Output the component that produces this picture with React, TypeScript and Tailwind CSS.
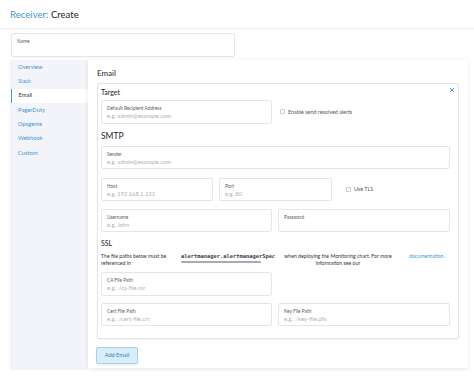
const nav = ['Overview', 'Slack', 'Email', 'PagerDuty', 'Opsgenie', 'Webhook', 'Custom']

function Field({ label, placeholder, w }: { label: string; placeholder?: string; w: string }) {
  return (
    <div className={`${w} h-[23px] border border-[#e4e5ea] rounded-[2px] bg-white px-[5px] pt-[4px] flex flex-col`}>
      <span className="text-[4.8px] leading-[6px] text-[#5a5b63]">{label}</span>
      {placeholder && <span className="text-[5.8px] leading-[8px] mt-[1px] text-[#b0b1b7]">{placeholder}</span>}
    </div>
  )
}

function Check({ label }: { label: string }) {
  return (
    <div className="flex items-center gap-[3px] ml-[8px]">
      <span className="w-[5px] h-[5px] border border-[#c9cad0] rounded-[1px] bg-white" />
      <span className="text-[5.4px] text-[#55565c]">{label}</span>
    </div>
  )
}

export default function App() {
  return (
    <div className="w-[474px] h-[384px] bg-white overflow-hidden font-['Lato','Liberation_Sans',sans-serif] text-[#222]">
      <div className="pl-[10px] pt-[8px] h-[29px] border-b border-[#e9eaee]">
        <h1 className="text-[9.6px] leading-[14px]">
          <span className="text-[#3d98d4]">Receiver:</span> <span className="text-[#1d1d1f]">Create</span>
        </h1>
      </div>

      <div className="ml-[11px] mt-[4px] w-[224px] h-[24px] border border-[#e4e5ea] rounded-[2px] px-[5px] pt-[4px] shadow-[0_1px_2px_rgba(0,0,0,0.04)]">
        <span className="text-[4.8px] leading-[6px] text-[#5a5b63] block">Name</span>
      </div>

      <div className="flex ml-[10px] mt-[3px]">
        <div className="w-[78px] h-[310px] flex flex-col">
          {nav.map((n) => (
            <div
              key={n}
              className={
                n === 'Email'
                  ? 'h-[14.3px] flex items-center pl-[7px] bg-white border-l-[1.5px] border-[#3d98d4] ml-[0.5px] text-[5.8px] text-[#333]'
                  : 'h-[14.3px] flex items-center pl-[8px] bg-[#f3f4f9] text-[5.8px] text-[#3d98d4]'
              }
            >
              {n}
            </div>
          ))}
          <div className="flex-1 bg-[#f3f4f9]" />
        </div>

        <div className="w-[380px] h-[308px] bg-white shadow-[0_1px_4px_rgba(0,0,0,0.10)] pl-[9px] pt-[7px]">
          <h2 className="text-[8px] leading-[12px] text-[#222]">Email</h2>

          <div className="relative mt-[4px] w-[362px] h-[256px] border border-[#e2e3e8] rounded-[2px] pl-[3px] pt-[3px] shadow-[0_1px_2px_rgba(0,0,0,0.04)]">
            <svg className="absolute right-[3px] top-[3px]" width="6" height="6" viewBox="0 0 6 6">
              <path d="M1 1L5 5M5 1L1 5" stroke="#3d98d4" strokeWidth="1" />
            </svg>

            <h3 className="text-[7px] leading-[10px] text-[#222]">Target</h3>
            <div className="flex items-center mt-[3px]">
              <Field label="Default Recipient Address" placeholder="e.g. admin@example.com" w="w-[171px] h-[24px]" />
              <Check label="Enable send resolved alerts" />
            </div>

            <h3 className="text-[8.5px] leading-[12px] mt-[6px] text-[#222]">SMTP</h3>
            <div className="mt-[4px]">
              <Field label="Sender" placeholder="e.g. admin@example.com" w="w-[349px]" />
            </div>

            <div className="flex items-center gap-[6px] mt-[9px]">
              <Field label="Host" placeholder="e.g. 192.168.1.121" w="w-[112px]" />
              <Field label="Port" placeholder="e.g. 80" w="w-[113px]" />
              <Check label="Use TLS" />
            </div>

            <div className="flex gap-[6px] mt-[8px]">
              <Field label="Username" placeholder="e.g. John" w="w-[171px]" />
              <Field label="Password" w="w-[172px]" />
            </div>

            <h3 className="text-[7px] leading-[10px] mt-[6px] text-[#222]">SSL</h3>
            <div className="flex items-start mt-[5px] text-[5.2px] leading-[7px] text-[#333]">
              <p className="w-[80px]">The file paths below must be referenced in</p>
              <div className="w-[100px]">
                <code className="font-['DejaVu_Sans_Mono',monospace] text-[5.4px] leading-[7px] font-semibold text-[#3b3c44] whitespace-nowrap block">
                  alertmanager.alertmanagerSpec
                </code>
                <div className="w-[80px] h-[2px] mt-[0.5px] rounded-full bg-[#a9aab3]" />
              </div>
              <p className="w-[114px] text-center">when deploying the Monitoring chart. For more information see our</p>
              <a className="ml-[14px] text-[#3d98d4]">documentation.</a>
            </div>

            <div className="mt-[5px]">
              <Field label="CA File Path" placeholder="e.g. ./ca-file.csr" w="w-[171px] h-[24px]" />
            </div>

            <div className="flex gap-[6px] mt-[7px]">
              <Field label="Cert File Path" placeholder="e.g. ./cert-file.crt" w="w-[171px]" />
              <Field label="Key File Path" placeholder="e.g. ./key-file.pfx" w="w-[172px]" />
            </div>
          </div>

          <button className="mt-[5px] -ml-[1px] w-[42px] h-[17px] rounded-[2px] bg-[#d9edf9] border border-[#a6d2ee] text-[5.6px] text-[#2f7fb8] shadow-[0_1px_2px_rgba(0,0,0,0.08)]">
            Add Email
          </button>
        </div>
      </div>
    </div>
  )
}
